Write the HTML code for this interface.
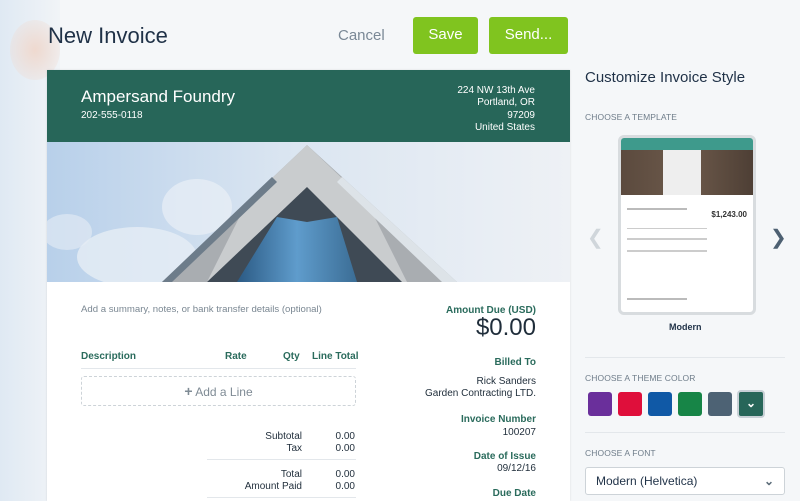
<!DOCTYPE html>
<html><head><meta charset="utf-8"><style>
*{margin:0;padding:0;box-sizing:border-box}
body{width:800px;height:501px;overflow:hidden;background:#f5f7f9;font-family:"Liberation Sans",Arial,sans-serif;position:relative}
.abs{position:absolute}
.bgblob{left:0;top:0;width:60px;height:501px;background:linear-gradient(90deg,#dfe9f3,#f1f4f7)}
.blob{left:10px;top:20px;width:50px;height:60px;border-radius:50%;background:radial-gradient(#efd9cf,rgba(240,220,210,0));}
h1{position:absolute;left:48px;top:23px;font-weight:normal;font-size:22px;color:#1f3147}
.cancel{left:338px;top:27px;font-size:15px;color:#7a8896}
.btn{background:#80c41f;color:#fff;font-size:15px;border-radius:3px;text-align:center;line-height:35px;top:17px;height:37px}
.card{left:47px;top:70px;width:523px;height:431px;background:#fff;box-shadow:0 0 2px rgba(0,0,0,.12)}
.hdr{left:0;top:0;width:523px;height:72px;background:#276659;color:#fff}
.g{color:#2a6b5c;font-weight:bold;font-size:10px}
.t{font-size:10px;color:#1f2d3a}
.r{text-align:right}
.rp{left:585px}
.cap{font-size:8.5px;color:#6f7d8a;letter-spacing:.1px}
.sw{top:392px;width:24px;height:24px;border-radius:3px}
.line{height:1px;background:#e3e7eb}
</style></head><body>
<div class="abs bgblob"></div><div class="abs blob"></div>
<h1>New Invoice</h1>
<div class="abs cancel">Cancel</div>
<div class="abs btn" style="left:413px;width:65px">Save</div>
<div class="abs btn" style="left:489px;width:79px">Send...</div>

<div class="abs card">
 <div class="abs hdr">
  <div class="abs" style="left:34px;top:17px;font-size:17px">Ampersand Foundry</div>
  <div class="abs" style="left:34px;top:40px;font-size:10px">202-555-0118</div>
  <div class="abs r" style="right:35px;top:15px;font-size:10px;line-height:12.3px">224 NW 13th Ave<br>Portland, OR<br>97209<br>United States</div>
 </div>
 <svg class="abs" style="left:0;top:72px" width="523" height="140" viewBox="0 0 523 140">
  <defs>
   <linearGradient id="sky" x1="0" x2="1" y1="0" y2="0"><stop offset="0" stop-color="#b8d0ea"/><stop offset=".45" stop-color="#dae5f1"/><stop offset="1" stop-color="#eef1f5"/></linearGradient>
   <linearGradient id="gl" x1="0" x2="1"><stop offset="0" stop-color="#2b5a84"/><stop offset=".5" stop-color="#5f9ccc"/><stop offset="1" stop-color="#3b6d95"/></linearGradient>
  </defs>
  <rect width="523" height="140" fill="url(#sky)"/>
  <ellipse cx="90" cy="115" rx="60" ry="30" fill="#e6edf5" opacity=".8"/>
  <ellipse cx="150" cy="65" rx="35" ry="28" fill="#e9eff6" opacity=".7"/>
  <ellipse cx="20" cy="90" rx="25" ry="18" fill="#e6edf5" opacity=".6"/>
  <polygon points="260,3 410,140 115,140" fill="#a9adb1"/>
  <polygon points="260,3 320,60 360,140 160,140 200,60" fill="#c9ccce"/>
  <polygon points="260,45 355,140 160,140" fill="#3f4a55"/>
  <polygon points="230,75 260,80 290,75 310,140 190,140" fill="url(#gl)"/>
  <polygon points="115,140 225,35 230,40 125,140" fill="#6d7c8a"/>
  <polygon points="295,35 410,140 395,140 290,40" fill="#dde3e8"/>
 </svg>
 <div class="abs" style="left:34px;top:234px;font-size:9.6px;color:#7a8792">Add a summary, notes, or bank transfer details (optional)</div>
 <div class="abs g r" style="right:34px;top:235px">Amount Due (USD)</div>
 <div class="abs r" style="right:34px;top:244px;font-size:24px;color:#1f2d3a">$0.00</div>
 <div class="abs g" style="left:34px;top:281px">Description</div>
 <div class="abs g" style="left:178px;top:281px">Rate</div>
 <div class="abs g" style="left:236px;top:281px">Qty</div>
 <div class="abs g" style="left:265px;top:281px">Line Total</div>
 <div class="abs line" style="left:34px;top:298px;width:275px"></div>
 <div class="abs" style="left:34px;top:306px;width:275px;height:30px;border:1px dashed #cdd3d8;border-radius:3px;text-align:center;line-height:28px;font-size:12px;color:#7f8b95"><b style="font-size:14px">+</b> Add a Line</div>
 <div class="abs t r" style="left:150px;width:105px;top:361px;line-height:12px">Subtotal<br>Tax</div>
 <div class="abs t r" style="left:260px;width:48px;top:361px;line-height:12px">0.00<br>0.00</div>
 <div class="abs line" style="left:160px;top:389px;width:149px"></div>
 <div class="abs t r" style="left:150px;width:105px;top:399px;line-height:12px">Total<br>Amount Paid</div>
 <div class="abs t r" style="left:260px;width:48px;top:399px;line-height:12px">0.00<br>0.00</div>
 <div class="abs line" style="left:160px;top:427px;width:149px"></div>
 <div class="abs g r" style="right:34px;top:287px">Billed To</div>
 <div class="abs t r" style="right:34px;top:306px;line-height:12px">Rick Sanders<br>Garden Contracting LTD.</div>
 <div class="abs g r" style="right:34px;top:344px">Invoice Number</div>
 <div class="abs t r" style="right:34px;top:357px">100207</div>
 <div class="abs g r" style="right:34px;top:381px">Date of Issue</div>
 <div class="abs t r" style="right:34px;top:393px">09/12/16</div>
 <div class="abs g r" style="right:34px;top:418px">Due Date</div>
</div>

<div class="abs rp" style="top:69px;font-size:15px;color:#1f3147">Customize Invoice Style</div>
<div class="abs rp cap" style="top:112px">CHOOSE A TEMPLATE</div>
<div class="abs" style="left:618px;top:135px;width:138px;height:180px;background:#fff;border:3px solid #d8dcdf;border-radius:6px;overflow:hidden">
 <div style="height:12px;background:#3e9a8c"></div>
 <div style="height:45px;background:linear-gradient(90deg,#5b4a3e,#6d5a4b,#4e3f35)"><div style="margin-left:42px;width:38px;height:45px;background:#eee"></div></div>
 <div style="position:absolute;right:6px;top:72px;font-size:8px;font-weight:bold;color:#333">$1,243.00</div>
 <div style="position:absolute;left:6px;top:70px;width:60px;height:2px;background:#bbb"></div>
 <div style="position:absolute;left:6px;top:90px;width:80px;height:1px;background:#ccc"></div>
 <div style="position:absolute;left:6px;top:100px;width:80px;height:2px;background:#ccc"></div>
 <div style="position:absolute;left:6px;top:112px;width:80px;height:2px;background:#ccc"></div>
 <div style="position:absolute;left:6px;top:160px;width:60px;height:2px;background:#bbb"></div>
</div>
<div class="abs" style="left:587px;top:225px;font-size:20px;color:#d0d6db">&#10094;</div>
<div class="abs" style="left:770px;top:225px;font-size:20px;color:#4d6072">&#10095;</div>
<div class="abs" style="left:669px;top:322px;font-size:9px;font-weight:bold;color:#1f3147">Modern</div>
<div class="abs line rp" style="top:357px;width:200px"></div>
<div class="abs rp cap" style="top:373px">CHOOSE A THEME COLOR</div>
<div class="abs sw" style="left:588px;background:#6a2f9b"></div>
<div class="abs sw" style="left:618px;background:#df0f3b"></div>
<div class="abs sw" style="left:648px;background:#1059a6"></div>
<div class="abs sw" style="left:678px;background:#178547"></div>
<div class="abs sw" style="left:708px;background:#4d6274"></div>
<div class="abs" style="left:737px;top:390px;width:28px;height:28px;border-radius:4px;border:2px solid #c8d0d6;background:#276659;color:#fff;text-align:center;line-height:22px;font-size:12px;font-weight:bold">&#8964;</div>
<div class="abs line rp" style="top:432px;width:200px"></div>
<div class="abs rp cap" style="top:448px">CHOOSE A FONT</div>
<div class="abs rp" style="top:467px;width:200px;height:28px;background:#fff;border:1px solid #cdd3d8;border-radius:3px;font-size:12px;color:#1f3147;line-height:26px;padding-left:10px">Modern (Helvetica)<span style="position:absolute;right:10px;color:#5a6b78;font-weight:bold">&#8964;</span></div>
</body></html>
